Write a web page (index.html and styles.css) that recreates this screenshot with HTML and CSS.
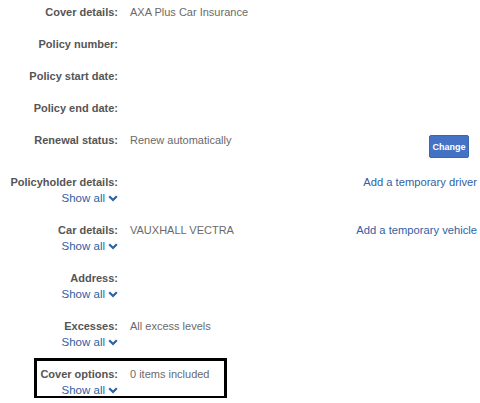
FILE: index.html
```html
<!DOCTYPE html>
<html>
<head>
<meta charset="utf-8">
<link rel="stylesheet" href="styles.css">
</head>
<body>
<div class="list">
  <div class="row">
    <div class="label">Cover details:</div>
    <div class="value">AXA Plus Car Insurance</div>
    <div class="action"></div>
  </div>
  <div class="row">
    <div class="label">Policy number:</div>
    <div class="value"></div>
    <div class="action"></div>
  </div>
  <div class="row">
    <div class="label">Policy start date:</div>
    <div class="value"></div>
    <div class="action"></div>
  </div>
  <div class="row">
    <div class="label">Policy end date:</div>
    <div class="value"></div>
    <div class="action"></div>
  </div>
  <div class="row">
    <div class="label">Renewal status:</div>
    <div class="value">Renew automatically</div>
    <div class="action"><button class="btn">Change</button></div>
  </div>
  <div class="row">
    <div class="label">Policyholder details:<a class="show" href="#">Show all <svg class="chev" viewBox="0 0 10 7" width="10" height="7"><path d="M1.2 1.2 L5 5 L8.8 1.2"/></svg></a></div>
    <div class="value"></div>
    <div class="action"><a class="link" href="#">Add a temporary driver</a></div>
  </div>
  <div class="row">
    <div class="label">Car details:<a class="show" href="#">Show all <svg class="chev" viewBox="0 0 10 7" width="10" height="7"><path d="M1.2 1.2 L5 5 L8.8 1.2"/></svg></a></div>
    <div class="value">VAUXHALL VECTRA</div>
    <div class="action"><a class="link" href="#">Add a temporary vehicle</a></div>
  </div>
  <div class="row">
    <div class="label">Address:<a class="show" href="#">Show all <svg class="chev" viewBox="0 0 10 7" width="10" height="7"><path d="M1.2 1.2 L5 5 L8.8 1.2"/></svg></a></div>
    <div class="value"></div>
    <div class="action"></div>
  </div>
  <div class="row">
    <div class="label">Excesses:<a class="show" href="#">Show all <svg class="chev" viewBox="0 0 10 7" width="10" height="7"><path d="M1.2 1.2 L5 5 L8.8 1.2"/></svg></a></div>
    <div class="value">All excess levels</div>
    <div class="action"></div>
  </div>
  <div class="row highlight">
    <div class="label">Cover options:<a class="show" href="#">Show all <svg class="chev" viewBox="0 0 10 7" width="10" height="7"><path d="M1.2 1.2 L5 5 L8.8 1.2"/></svg></a></div>
    <div class="value">0 items included</div>
    <div class="action"></div>
  </div>
</div>
</body>
</html>
```
FILE: styles.css
```css
html, body {
  margin: 0;
  padding: 0;
  background: #ffffff;
}
body {
  font-family: "Liberation Sans", Arial, sans-serif;
  font-size: 11px;
  line-height: 16px;
  color: #666666;
}
.list {
  display: flex;
  flex-direction: column;
  gap: 16px;
  padding: 4px 3px 0 0;
}
.row {
  position: relative;
  display: grid;
  grid-template-columns: 118px 1fr auto;
  column-gap: 12px;
  align-items: start;
}
.label {
  display: flex;
  flex-direction: column;
  align-items: flex-end;
  font-weight: bold;
  color: #555555;
  white-space: nowrap;
}
.value {
  color: #6a6a6a;
}
.action {
  display: flex;
  justify-content: flex-end;
}
.show {
  font-weight: normal;
  color: #2f61a3;
  text-decoration: none;
  font-size: 11.5px;
  display: flex;
  align-items: center;
  gap: 3px;
}
.chev {
  fill: none;
  stroke: #2f61a3;
  stroke-width: 2.2;
  margin-top: 1px;
}
.link {
  color: #2f61a3;
  text-decoration: none;
  font-size: 11.2px;
}
.btn {
  margin: 3px 8px 0 0;
  width: 40px;
  height: 23px;
  padding: 0;
  border: 1px solid #3b66b0;
  border-radius: 2px;
  background: #4472c4;
  color: #ffffff;
  font-family: "Liberation Sans", Arial, sans-serif;
  font-size: 9px;
  font-weight: bold;
}
.highlight::after {
  content: "";
  position: absolute;
  left: 34px;
  top: -8px;
  width: 193px;
  height: 41px;
  box-sizing: border-box;
  border: 3px solid #000000;
  pointer-events: none;
}
```
